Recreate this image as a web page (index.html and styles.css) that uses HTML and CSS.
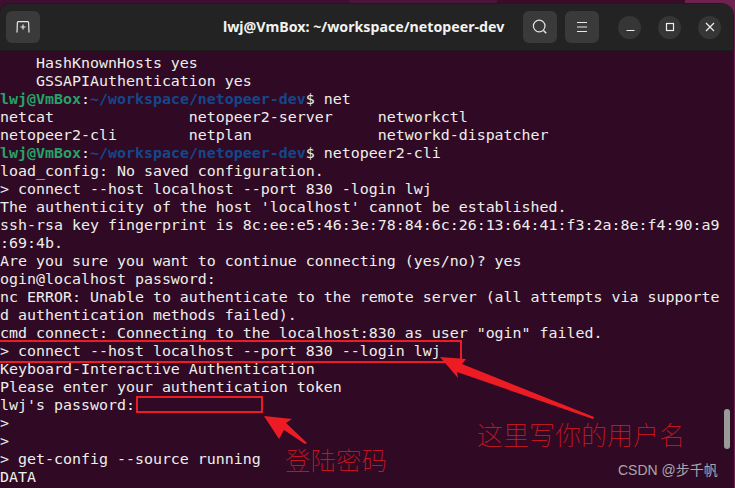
FILE: index.html
```html
<!DOCTYPE html>
<html lang="en">
<head>
<meta charset="utf-8">
<title>lwj@VmBox: ~/workspace/netopeer-dev</title>
<link rel="stylesheet" href="styles.css">
</head>
<body>
<div class="desktop">
  <div class="window">
    <header class="titlebar">
      <div class="tb-left">
        <button class="tool-btn btn-new" aria-label="New tab">
          <svg width="16" height="12" viewBox="0 0 16 12" fill="none" stroke="#e8e8e8" stroke-width="1.2"><path d="M2 11.5 L2.4 1.6 Q2.4 .7 3.4 .7 H12.6 Q13.6 .7 13.6 1.6 L14 11.5"/><path d="M8 3.5V8.5M5.5 6H10.5"/></svg>
        </button>
      </div>
      <div class="title">lwj@VmBox: ~/workspace/netopeer-dev</div>
      <div class="tb-right">
        <button class="tool-btn btn-search" aria-label="Search">
          <svg width="16" height="16" viewBox="0 0 16 16" fill="none" stroke="#e4e4e4" stroke-width="1.2"><circle cx="7.2" cy="7" r="5.8"/><path d="M11.5 11.5L14.2 14.3" stroke-width="1.5"/></svg>
        </button>
        <button class="tool-btn btn-menu" aria-label="Menu">
          <svg width="12" height="10" viewBox="0 0 12 10" stroke="#e8e8e8" stroke-width="1.1"><path d="M1 .5H11M1 5H11M1 9.5H11"/></svg>
        </button>
        <div class="win-controls">
          <button class="win-btn" aria-label="Minimize"><svg width="10" height="10" viewBox="0 0 10 10" stroke="#eee" stroke-width="1.2"><path d="M1.5 8.5H9.5"/></svg></button>
          <button class="win-btn" aria-label="Maximize"><svg width="10" height="10" viewBox="0 0 10 10" fill="none" stroke="#eee" stroke-width="1.2"><rect x="1.5" y="1.5" width="7" height="7"/></svg></button>
          <button class="win-btn" aria-label="Close"><svg width="10" height="10" viewBox="0 0 10 10" stroke="#eee" stroke-width="1.2"><path d="M1 1L9 9M9 1L1 9"/></svg></button>
        </div>
      </div>
    </header>
    <main class="terminal">
      <div class="output">
        <div class="line">    HashKnownHosts yes</div>
        <div class="line">    GSSAPIAuthentication yes</div>
        <div class="line"><span class="user">lwj@VmBox</span>:<span class="path">~/workspace/netopeer-dev</span>$ net</div>
        <div class="line">netcat               netopeer2-server     networkctl</div>
        <div class="line">netopeer2-cli        netplan              networkd-dispatcher</div>
        <div class="line"><span class="user">lwj@VmBox</span>:<span class="path">~/workspace/netopeer-dev</span>$ netopeer2-cli</div>
        <div class="line">load_config: No saved configuration.</div>
        <div class="line">&gt; connect --host localhost --port 830 -login lwj</div>
        <div class="line">The authenticity of the host 'localhost' cannot be established.</div>
        <div class="line">ssh-rsa key fingerprint is 8c:ee:e5:46:3e:78:84:6c:26:13:64:41:f3:2a:8e:f4:90:a9</div>
        <div class="line">:69:4b.</div>
        <div class="line">Are you sure you want to continue connecting (yes/no)? yes</div>
        <div class="line">ogin@localhost password:</div>
        <div class="line">nc ERROR: Unable to authenticate to the remote server (all attempts via supporte</div>
        <div class="line">d authentication methods failed).</div>
        <div class="line">cmd connect: Connecting to the localhost:830 as user "ogin" failed.</div>
        <div class="line">&gt; connect --host localhost --port 830 --login lwj</div>
        <div class="line">Keyboard-Interactive Authentication</div>
        <div class="line">Please enter your authentication token</div>
        <div class="line">lwj's password:</div>
        <div class="line">&gt;</div>
        <div class="line">&gt;</div>
        <div class="line">&gt; get-config --source running</div>
        <div class="line">DATA</div>
      </div>
      <div class="scrollbar"></div>
    </main>
  </div>
  <div class="mark mark-login"></div>
  <div class="mark mark-pass"></div>
  <svg class="arrows" width="735" height="488" viewBox="0 0 735 488" fill="#ed1c24">
    <path d="M440 357 L466 359 L462 364 L594 417 L593 419 L457 372 L458 378 Z"/>
    <path d="M264 416 L292 419 L286 423 L307 443 L305 444 L284 430 L279 439 Z"/>
  </svg>
  <div class="note note-user">这里写你的用户名</div>
  <div class="note note-pass">登陆密码</div>
  <div class="watermark">CSDN @步千帆</div>
</div>
</body>
</html>
```

FILE: styles.css
```css
* { box-sizing: border-box; }
html, body { margin: 0; padding: 0; }
body { width: 735px; height: 488px; overflow: hidden; background: #300a24; }
.desktop {
  position: relative;
  width: 735px;
  height: 488px;
  padding-top: 4px;
  background: linear-gradient(90deg, #3e0f30 0 350px, #4a1538 350px 497px, #3a0c2a 497px 685px, #6d2250 685px);
  overflow: hidden;
}
.window {
  width: 733px;
  height: 484px;
  display: flex;
  flex-direction: column;
  border-radius: 10px 12px 0 0;
  overflow: hidden;
  box-shadow: 0 0 0 1px #1c1c1c;
}
.titlebar {
  flex: none;
  height: 47px;
  background: #232323;
  border-bottom: 1px solid #1b1b1b;
  display: flex;
  align-items: center;
  justify-content: space-between;
  padding: 0 12px 0 6px;
  position: relative;
}
.tb-left, .tb-right { display: flex; align-items: center; }
.title {
  position: absolute;
  left: 223px;
  top: 13px;
  font: 700 14.2px/20px "Noto Sans", "Open Sans", sans-serif;
  color: #f2f2f2;
  white-space: nowrap;
}
button { border: 0; padding: 0; margin: 0; display: flex; align-items: center; justify-content: center; }
.tool-btn { width: 34px; height: 32px; background: #3a3a3a; border-radius: 6px; }
.btn-search { margin-right: 8px; }
.win-controls { display: flex; gap: 17px; margin-left: 19px; }
.win-btn { width: 23px; height: 23px; border-radius: 50%; background: #363636; }
.terminal {
  flex: 1;
  background: #300a24;
  position: relative;
  overflow: hidden;
}
.output {
  padding-top: 3px;
  font: 14.95px/18px "DejaVu Sans Mono", monospace;
  color: #eeeeec;
}
.line { height: 18px; white-space: pre; }
.user { color: #26a269; font-weight: 700; }
.path { color: #12488b; font-weight: 700; }
.scrollbar {
  position: absolute;
  right: 3px;
  top: 358px;
  width: 6px;
  height: 40px;
  border-radius: 3px;
  background: #9a9a9a;
}
.mark { position: absolute; border: 2px solid #ed1c24; }
.mark-login { left: -4px; top: 340px; width: 466px; height: 23px; }
.mark-pass { left: 136px; top: 396px; width: 127px; height: 17px; }
.arrows { position: absolute; left: 0; top: 0; }
.note {
  position: absolute;
  font-family: "Noto Sans CJK SC", serif;
  color: #d81a22;
  white-space: nowrap;
}
.note-user { left: 477px; top: 416px; font-size: 26px; line-height: 36px; font-weight: 100; }
.note-pass { left: 285px; top: 441px; font-size: 25.5px; line-height: 36px; font-weight: 100; }
.watermark {
  position: absolute;
  left: 618px;
  top: 461px;
  font: 14px/18px "Liberation Sans", "Noto Sans CJK SC", sans-serif;
  color: #a8a8a8;
  white-space: nowrap;
}
```
